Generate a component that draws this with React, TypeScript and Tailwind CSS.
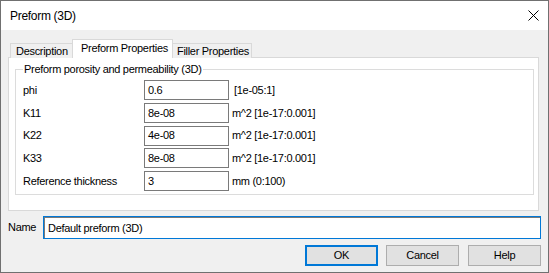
import React from "react";

const font = { fontFamily: '"Liberation Sans", Arial, sans-serif' };

function Row({ label, value, unit, unitPad }: { label: string; value: string; unit: string; unitPad?: boolean }) {
  return (
    <div className="flex items-center h-[20px]">
      <div className="w-[121px] text-[11px] tracking-[-0.3px] text-black">{label}</div>
      <div className="w-[85px] h-[20px] border border-[#7a7a7a] bg-white flex items-center pl-[3px] text-[11px] tracking-[-0.3px] text-black">
        {value}
      </div>
      <div className={`${unitPad ? "ml-[5px]" : "ml-[3px]"} text-[11px] tracking-[-0.3px] text-black`}>{unit}</div>
    </div>
  );
}

export default function App() {
  return (
    <div
      className="w-[549px] h-[273px] flex flex-col border border-[#707070] bg-[#f0f0f0] overflow-hidden"
      style={font}
    >
      {/* Title bar */}
      <div className="h-[29px] bg-white flex items-center justify-between pl-[9px] pr-[9px] shrink-0">
        <div className="text-[12px] tracking-[-0.3px] text-black">Preform (3D)</div>
        <svg width="11" height="11" viewBox="0 0 11 11">
          <path d="M0.5 0.5 L10.5 10.5 M10.5 0.5 L0.5 10.5" stroke="#000" strokeWidth="1" />
        </svg>
      </div>

      {/* Body */}
      <div className="flex-1 flex flex-col px-[7px]">
        {/* Tabs */}
        <div className="flex items-end pt-[9px] pl-[2px] relative z-10">
          <div className="h-[15px] w-[63px] border border-b-0 border-[#d9d9d9] bg-[#f0f0f0] flex items-center pl-[5px] text-[11px] tracking-[-0.3px] text-black -mb-px">
            Description
          </div>
          <div className="h-[19px] w-[101px] border border-b-0 border-[#d9d9d9] bg-white flex items-center pl-[8px] pb-[2px] text-[11px] tracking-[-0.3px] text-black -ml-px -mb-px">
            Preform Properties
          </div>
          <div className="h-[15px] w-[80px] border border-b-0 border-[#d9d9d9] bg-[#f0f0f0] flex items-center pl-[4px] text-[11px] tracking-[-0.3px] text-black -ml-px -mb-px">
            Filler Properties
          </div>
        </div>

        {/* Panel */}
        <div className="h-[154px] mr-[2px] border border-[#d9d9d9] bg-white pt-[11px] pl-[6px] pr-[4px] shrink-0">
          <div className="relative h-[126px] border border-[#dcdcdc] pt-[10px] pl-[7px]">
            <div className="absolute -top-[8px] left-[7px] bg-white px-[1px] text-[11px] tracking-[-0.3px] text-black leading-[14px]">
              Preform porosity and permeability (3D)
            </div>
            <div className="flex flex-col gap-[2.75px]">
              <Row label="phi" value="0.6" unit="[1e-05:1]" unitPad />
              <Row label="K11" value="8e-08" unit="m^2 [1e-17:0.001]" />
              <Row label="K22" value="4e-08" unit="m^2 [1e-17:0.001]" />
              <Row label="K33" value="8e-08" unit="m^2 [1e-17:0.001]" />
              <Row label="Reference thickness" value="3" unit="mm (0:100)" />
            </div>
          </div>
        </div>

        {/* Name row */}
        <div className="flex items-center mt-[5px] h-[23px]">
          <div className="w-[35px] text-[11px] tracking-[-0.3px] text-black">Name</div>
          <div className="flex-1 h-[23px] border border-[#0078d7] bg-white">
            <div className="h-full border-t border-l border-[#7a7a7a] flex items-center pl-[3px] text-[11px] tracking-[-0.3px] text-black">
              Default preform (3D)
            </div>
          </div>
        </div>

        {/* Buttons */}
        <div className="flex justify-end mt-[6px]">
          <div className="w-[73px] h-[21px] border-2 border-[#0078d7] bg-[#e1e1e1] flex items-center justify-center text-[11px] tracking-[-0.3px] text-black">
            OK
          </div>
          <div className="ml-[8px] w-[73px] h-[21px] border border-[#adadad] bg-[#e1e1e1] flex items-center justify-center text-[11px] tracking-[-0.3px] text-black">
            Cancel
          </div>
          <div className="ml-[9px] w-[73px] h-[21px] border border-[#adadad] bg-[#e1e1e1] flex items-center justify-center text-[11px] tracking-[-0.3px] text-black">
            Help
          </div>
        </div>
      </div>
    </div>
  );
}
